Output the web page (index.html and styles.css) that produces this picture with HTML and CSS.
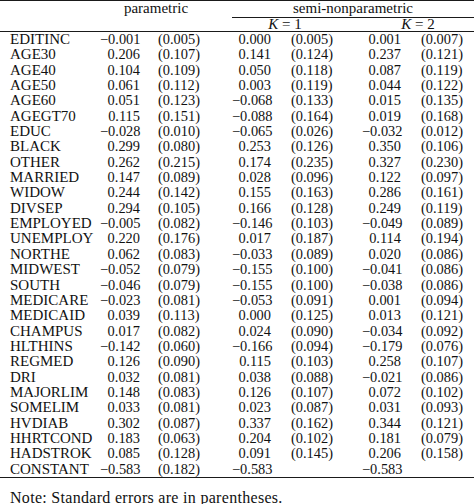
FILE: index.html
```html
<!DOCTYPE html>
<html>
<head>
<meta charset="utf-8">
<link rel="stylesheet" href="styles.css">
</head>
<body>
<div class="page">
  <div class="table">
    <div class="head1">
      <div class="c1"></div>
      <div class="param">parametric</div>
      <div class="semi">semi-nonparametric</div>
    </div>
    <div class="head2">
      <div class="c1"></div>
      <div class="blank"></div>
      <div class="k k1"><i>K</i> = 1</div>
      <div class="k k2"><i>K</i> = 2</div>
    </div>
    <div class="body" id="body"></div>
  </div>
  <div class="note">Note: Standard errors are in parentheses.</div>
</div>
<script src="script.js"></script>
</body>
</html>
```

FILE: script.js
```js
const rows = [
["EDITINC","−0.001","(0.005)","0.000","(0.005)","0.001","(0.007)"],
["AGE30","0.206","(0.107)","0.141","(0.124)","0.237","(0.121)"],
["AGE40","0.104","(0.109)","0.050","(0.118)","0.087","(0.119)"],
["AGE50","0.061","(0.112)","0.003","(0.119)","0.044","(0.122)"],
["AGE60","0.051","(0.123)","−0.068","(0.133)","0.015","(0.135)"],
["AGEGT70","0.115","(0.151)","−0.088","(0.164)","0.019","(0.168)"],
["EDUC","−0.028","(0.010)","−0.065","(0.026)","−0.032","(0.012)"],
["BLACK","0.299","(0.080)","0.253","(0.126)","0.350","(0.106)"],
["OTHER","0.262","(0.215)","0.174","(0.235)","0.327","(0.230)"],
["MARRIED","0.147","(0.089)","0.028","(0.096)","0.122","(0.097)"],
["WIDOW","0.244","(0.142)","0.155","(0.163)","0.286","(0.161)"],
["DIVSEP","0.294","(0.105)","0.166","(0.128)","0.249","(0.119)"],
["EMPLOYED","−0.005","(0.082)","−0.146","(0.103)","−0.049","(0.089)"],
["UNEMPLOY","0.220","(0.176)","0.017","(0.187)","0.114","(0.194)"],
["NORTHE","0.062","(0.083)","−0.033","(0.089)","0.020","(0.086)"],
["MIDWEST","−0.052","(0.079)","−0.155","(0.100)","−0.041","(0.086)"],
["SOUTH","−0.046","(0.079)","−0.155","(0.100)","−0.038","(0.086)"],
["MEDICARE","−0.023","(0.081)","−0.053","(0.091)","0.001","(0.094)"],
["MEDICAID","0.039","(0.113)","0.000","(0.125)","0.013","(0.121)"],
["CHAMPUS","0.017","(0.082)","0.024","(0.090)","−0.034","(0.092)"],
["HLTHINS","−0.142","(0.060)","−0.166","(0.094)","−0.179","(0.076)"],
["REGMED","0.126","(0.090)","0.115","(0.103)","0.258","(0.107)"],
["DRI","0.032","(0.081)","0.038","(0.088)","−0.021","(0.086)"],
["MAJORLIM","0.148","(0.083)","0.126","(0.107)","0.072","(0.102)"],
["SOMELIM","0.033","(0.081)","0.023","(0.087)","0.031","(0.093)"],
["HVDIAB","0.302","(0.087)","0.337","(0.162)","0.344","(0.121)"],
["HHRTCOND","0.183","(0.063)","0.204","(0.102)","0.181","(0.079)"],
["HADSTROK","0.085","(0.128)","0.091","(0.145)","0.206","(0.158)"],
["CONSTANT","−0.583","(0.182)","−0.583","","−0.583",""]
];
const body = document.getElementById("body");
const cls = ["c1","c2","c3","c4","c5","c6","c7"];
for (const r of rows) {
  const row = document.createElement("div");
  row.className = "row";
  r.forEach((v, i) => {
    const d = document.createElement("div");
    d.className = cls[i];
    d.textContent = v;
    row.appendChild(d);
  });
  body.appendChild(row);
}
```

FILE: styles.css
```css
html, body {
  margin: 0;
  padding: 0;
  background: #ffffff;
}
.page {
  width: 474px;
  height: 504px;
  overflow: hidden;
  font-family: "Liberation Serif", "Times New Roman", serif;
  font-size: 14.4px;
  color: #111111;
}
.table {
  border-top: 1.6px solid #1a1a1a;
  border-bottom: 1.6px solid #1a1a1a;
}
.head1, .head2, .row {
  display: grid;
  grid-template-columns: 100px 45px 87px 44px 86px 44px 68px;
}
.head1 {
  height: 15.5px;
  line-height: 15.5px;
}
.head2 {
  height: 14px;
  line-height: 14px;
  border-bottom: 1.4px solid #1a1a1a;
}
.param {
  grid-column: 2 / 4;
  text-align: center;
  padding-right: 20px;
  font-size: 15px;
}
.semi {
  grid-column: 4 / 8;
  text-align: center;
  border-bottom: 1px solid #1a1a1a;
  font-size: 15px;
}
.blank {
  grid-column: 2 / 4;
}
.k {
  font-size: 15px;
}
.k1 {
  grid-column: 4 / 6;
  text-align: center;
  padding-right: 24px;
}
.k2 {
  grid-column: 6 / 8;
  text-align: center;
}
.body {
  padding-top: 0.5px;
}
.row {
  height: 15.35px;
  line-height: 15.35px;
  white-space: nowrap;
}
.c1 { padding-left: 10px; font-size: 15px; }
.c2, .c4, .c6 { text-align: right; padding-right: 5px; }
.c3 { padding-left: 13px; }
.c5, .c7 { padding-left: 15px; }
.note {
  padding-left: 10px;
  margin-top: 12px;
  line-height: 16px;
  font-size: 16px;
  letter-spacing: 0.3px;
}
```
